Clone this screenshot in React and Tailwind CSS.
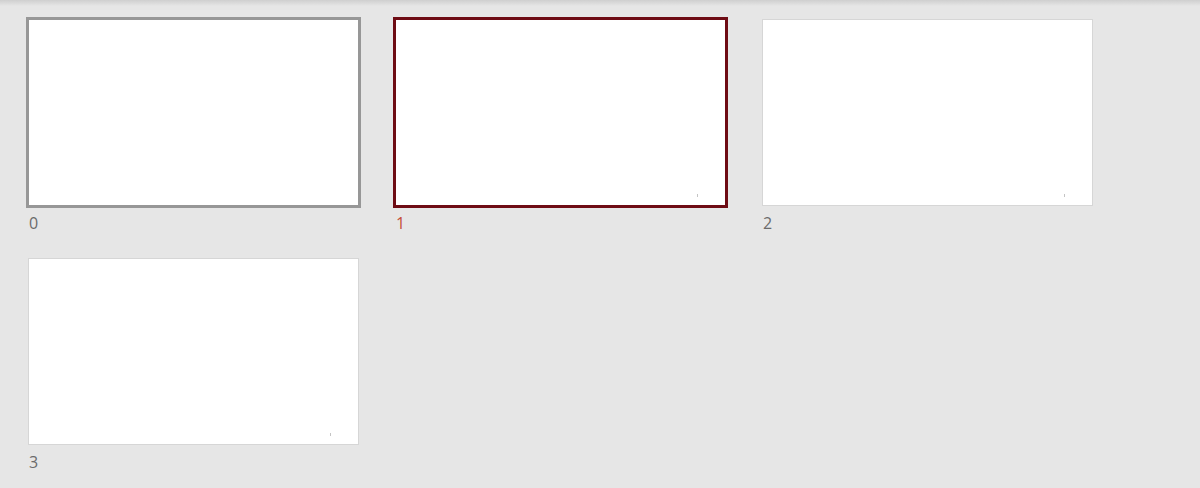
import React from "react";

const slides = [
  { id: 0, state: "hover", mark: false },
  { id: 1, state: "selected", mark: true },
  { id: 2, state: "normal", mark: true },
  { id: 3, state: "normal", mark: true },
];

const Thumb = ({ slide }) => {
  let frame = "border border-[#d6d6d6]";
  if (slide.state === "hover") frame = "border border-[#9a9a9a] outline-[3px] outline-solid outline-[#979797] -outline-offset-1";
  if (slide.state === "selected") frame = "border border-[#b04048] outline-[3px] outline-solid outline-[#6e0c14] -outline-offset-1";

  return (
    <div className="flex flex-col">
      <div className={`relative w-[331px] h-[187px] bg-white ${frame}`}>
        {slide.mark && (
          <span className="absolute right-[27px] bottom-[8px] w-px h-[3px] bg-[#c4c4c4]" />
        )}
      </div>
      <span
        className={`mt-[6px] pl-[1px] text-[16px] leading-[22px] ${slide.state === "selected" ? "text-[#c44e3a]" : "text-[#6b6b6b]"}`}
      >
        {slide.id}
      </span>
    </div>
  );
};

export default function App() {
  return (
    <div className="w-[1200px] h-[488px] bg-[#e6e6e6] overflow-hidden" style={{ fontFamily: '"Open Sans", "Noto Sans", sans-serif' }}>
      <div className="h-[6px] bg-gradient-to-b from-[#cfcfcf] to-[#e6e6e6]" />
      <div className="grid grid-cols-[repeat(3,331px)] gap-x-[36px] gap-y-[24px] pl-[28px] pt-[13px]">
        {slides.map((s) => (
          <Thumb key={s.id} slide={s} />
        ))}
      </div>
    </div>
  );
}
